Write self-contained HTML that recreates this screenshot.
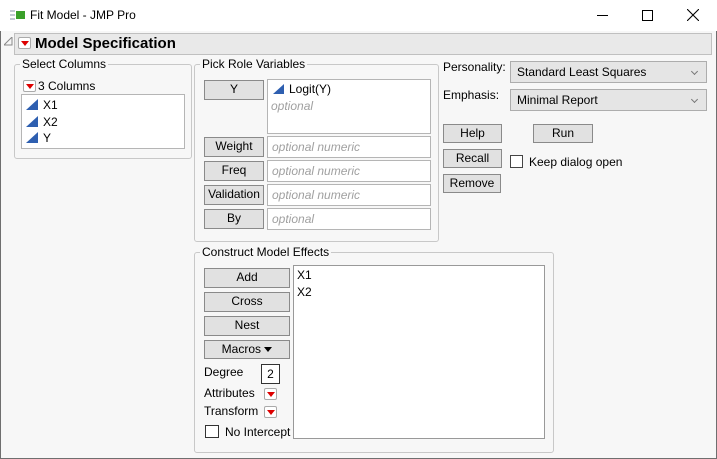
<!DOCTYPE html>
<html><head><style>
*{box-sizing:border-box;margin:0;padding:0}
body{width:717px;height:459px;overflow:hidden;background:#f7f7f7;font-family:"Liberation Sans",sans-serif;font-size:12px;color:#000;position:relative}
.a{position:absolute}
.win{position:absolute;left:0;top:0;width:717px;height:459px;border:1px solid #6f6f6f;border-top:none}
.title{position:absolute;left:0;top:0;width:717px;height:31px;background:#fff}
.btn{position:absolute;background:#e1e1e1;border:1px solid #8a8a8a;text-align:center;line-height:17px;font-size:12px}
.box{position:absolute;background:#fff;border:1px solid #b5b5b5}
.grp{position:absolute;border:1px solid #c8c8c8;border-radius:3px}
.lg{position:absolute;background:#f7f7f7;padding:0 2px;top:-8px;left:5px;line-height:14px}
.ph{color:#a0a0a0;font-style:italic;position:absolute;left:4px}
.red{position:absolute;width:13px;height:12px;background:#fff;border:1px solid #aaa;border-radius:2px}
.red:after{content:"";position:absolute;left:2px;top:3px;border-left:4px solid transparent;border-right:4px solid transparent;border-top:5px solid #d00}
.tri{position:absolute;width:0;height:0;border-left:12px solid transparent;border-bottom:11px solid #2e5fb0}
.cb{position:absolute;width:14px;height:14px;background:#fff;border:1px solid #333}
.combo{position:absolute;background:#e5e5e5;border:1px solid #adadad;padding-left:6px;line-height:20px}
.combo:after{content:"";position:absolute;right:9px;top:7px;width:4px;height:4px;border-right:1px solid #777;border-bottom:1px solid #777;transform:rotate(45deg)}
</style></head><body>
<div class="win"></div>
<div class="title">
 <svg class="a" style="left:10px;top:9px" width="16" height="12"><g stroke="#8896a8" stroke-width="1"><line x1="0" y1="2" x2="5" y2="2"/><line x1="0" y1="6" x2="5" y2="6"/><line x1="0" y1="10" x2="5" y2="10"/></g><rect x="6" y="2" width="9" height="8" fill="#3aa02a"/></svg>
 <div class="a" style="left:30px;top:8px;font-size:12px">Fit Model - JMP Pro</div>
 <div class="a" style="left:597px;top:15px;width:11px;height:1px;background:#000"></div>
 <div class="a" style="left:642px;top:10px;width:11px;height:11px;border:1px solid #000"></div>
 <svg class="a" style="left:687px;top:9px" width="12" height="12"><path d="M0 0L12 12M12 0L0 12" stroke="#000" stroke-width="1.1"/></svg>
</div>
<svg class="a" style="left:4px;top:37px" width="9" height="9"><path d="M8 0L0 8H8Z" fill="none" stroke="#888"/></svg>
<div class="a" style="left:14px;top:33px;width:698px;height:22px;background:#e9e9e9;border:1px solid #c0c0c0"></div>
<div class="red" style="left:18px;top:37px"></div>
<div class="a" style="left:35px;top:34px;font-size:15px;font-weight:bold;line-height:20px">Model Specification</div>

<div class="grp" style="left:14px;top:64px;width:178px;height:95px"><div class="lg">Select Columns</div></div>
<div class="red" style="left:23px;top:80px"></div>
<div class="a" style="left:38px;top:79px">3 Columns</div>
<div class="box" style="left:21px;top:94px;width:164px;height:55px"></div>
<div class="tri" style="left:26px;top:99px"></div><div class="a" style="left:43px;top:98px">X1</div>
<div class="tri" style="left:26px;top:116px"></div><div class="a" style="left:43px;top:115px">X2</div>
<div class="tri" style="left:26px;top:132px"></div><div class="a" style="left:43px;top:131px">Y</div>

<div class="grp" style="left:194px;top:64px;width:245px;height:178px"><div class="lg">Pick Role Variables</div></div>
<div class="btn" style="left:204px;top:80px;width:60px;height:20px">Y</div>
<div class="box" style="left:267px;top:79px;width:164px;height:55px"></div>
<div class="a" style="left:273px;top:84px;width:0;height:0;border-left:11px solid transparent;border-bottom:10px solid #2e5fb0"></div>
<div class="a" style="left:289px;top:82px">Logit(Y)</div>
<div class="ph" style="left:271px;top:99px">optional</div>
<div class="btn" style="left:204px;top:137px;width:60px;height:20px">Weight</div>
<div class="box" style="left:267px;top:136px;width:164px;height:22px"><span class="ph" style="top:3px">optional numeric</span></div>
<div class="btn" style="left:204px;top:161px;width:60px;height:20px">Freq</div>
<div class="box" style="left:267px;top:160px;width:164px;height:22px"><span class="ph" style="top:3px">optional numeric</span></div>
<div class="btn" style="left:204px;top:185px;width:60px;height:20px">Validation</div>
<div class="box" style="left:267px;top:184px;width:164px;height:22px"><span class="ph" style="top:3px">optional numeric</span></div>
<div class="btn" style="left:204px;top:209px;width:60px;height:20px">By</div>
<div class="box" style="left:267px;top:208px;width:164px;height:22px"><span class="ph" style="top:3px">optional</span></div>

<div class="a" style="left:443px;top:60px">Personality:</div>
<div class="combo" style="left:510px;top:61px;width:197px;height:22px">Standard Least Squares</div>
<div class="a" style="left:443px;top:88px">Emphasis:</div>
<div class="combo" style="left:510px;top:89px;width:197px;height:22px">Minimal Report</div>
<div class="btn" style="left:443px;top:124px;width:59px;height:19px">Help</div>
<div class="btn" style="left:533px;top:124px;width:60px;height:19px">Run</div>
<div class="btn" style="left:443px;top:149px;width:59px;height:19px">Recall</div>
<div class="cb" style="left:510px;top:155px;width:13px;height:13px;border-color:#444"></div>
<div class="a" style="left:529px;top:155px">Keep dialog open</div>
<div class="btn" style="left:443px;top:174px;width:58px;height:19px">Remove</div>

<div class="grp" style="left:194px;top:252px;width:360px;height:201px"><div class="lg">Construct Model Effects</div></div>
<div class="btn" style="left:204px;top:268px;width:86px;height:20px">Add</div>
<div class="btn" style="left:204px;top:292px;width:86px;height:20px">Cross</div>
<div class="btn" style="left:204px;top:316px;width:86px;height:20px">Nest</div>
<div class="btn" style="left:204px;top:340px;width:86px;height:19px">Macros <span style="display:inline-block;width:0;height:0;border-left:4px solid transparent;border-right:4px solid transparent;border-top:5px solid #000;vertical-align:middle"></span></div>
<div class="box" style="left:293px;top:265px;width:252px;height:174px;border-color:#999"></div>
<div class="a" style="left:297px;top:268px">X1</div>
<div class="a" style="left:297px;top:285px">X2</div>
<div class="a" style="left:204px;top:365px">Degree</div>
<div class="box" style="left:261px;top:364px;width:19px;height:20px;border-color:#333;text-align:center;line-height:18px">2</div>
<div class="a" style="left:204px;top:386px">Attributes</div>
<div class="red" style="left:264px;top:388px"></div>
<div class="a" style="left:204px;top:404px">Transform</div>
<div class="red" style="left:264px;top:406px"></div>
<div class="cb" style="left:205px;top:425px;width:14px;height:13px"></div>
<div class="a" style="left:225px;top:425px">No Intercept</div>
</body></html>
